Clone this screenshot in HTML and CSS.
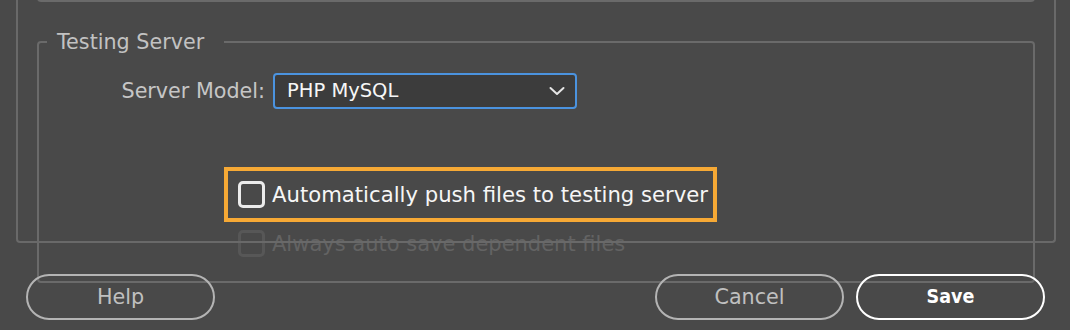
FILE: index.html
```html
<!DOCTYPE html>
<html lang="en">
<head>
<meta charset="utf-8">
<title>Site Setup - Testing Server</title>
<link rel="stylesheet" href="styles.css">
</head>
<body>
<div class="page">
  <div class="outer-frame"></div>
  <div class="prev-group"></div>
  <fieldset class="group">
    <legend class="group-title">Testing Server</legend>
    <div class="field-row">
      <label class="field-label">Server Model:</label>
      <div class="select">
        <span class="select-value">PHP MySQL</span>
        <svg class="chevron" width="16" height="10" viewBox="0 0 16 10"><path d="M1.5 2 L8 8 L14.5 2" fill="none" stroke="#e6e6e6" stroke-width="2" stroke-linecap="round" stroke-linejoin="round"/></svg>
      </div>
    </div>
    <div class="check-focus">
      <span class="checkbox"></span>
      <span class="check-label">Automatically push files to testing server</span>
    </div>
    <div class="check-row disabled">
      <span class="checkbox"></span>
      <span class="check-label">Always auto save dependent files</span>
    </div>
  </fieldset>
  <div class="buttons">
    <button class="btn">Help</button>
    <div class="spacer"></div>
    <button class="btn">Cancel</button>
    <button class="btn primary">Save</button>
  </div>
</div>
</body>
</html>
```

FILE: styles.css
```css
html, body {
  margin: 0;
  padding: 0;
  background: #494949;
  width: 1070px;
  height: 330px;
  overflow: hidden;
}

.page {
  position: relative;
  width: 1070px;
  height: 330px;
  font-family: "DejaVu Sans", "Noto Sans", sans-serif;
}

.outer-frame {
  position: absolute;
  left: 16px;
  top: -10px;
  width: 1040px;
  height: 257px;
  box-sizing: border-box;
  border: 2px solid #696969;
  border-top: none;
  border-radius: 0 0 4px 4px;
  pointer-events: none;
}

.prev-group {
  margin: -4px 35px 0 37px;
  height: 4px;
  border: 2px solid #6a6a6a;
  border-top: none;
  border-radius: 0 0 4px 4px;
}

.group {
  margin: 29px 35px 0 37px;
  padding: 0 0 24px 0;
  border: 2px solid #6a6a6a;
  border-radius: 4px;
  min-width: 0;
}

.group-title {
  margin-left: 8px;
  padding: 0 20px 0 10px;
  font-size: 20.7px;
  line-height: 22px;
  color: #c2c2c2;
}

.field-row {
  display: flex;
  align-items: center;
  margin-top: 20px;
  gap: 8px;
}

.field-label {
  width: 226px;
  text-align: right;
  font-size: 20.7px;
  line-height: 24px;
  color: #c6c6c6;
  white-space: nowrap;
}

.select {
  box-sizing: border-box;
  width: 304px;
  height: 36px;
  border: 2px solid #4b93df;
  border-radius: 4px;
  background: #3c3c3c;
  display: flex;
  align-items: center;
  padding: 0 10px 0 12px;
}

.select-value {
  flex: 1;
  font-size: 19.5px;
  line-height: 24px;
  color: #f6f6f6;
}

.chevron {
  display: block;
}

.check-focus {
  box-sizing: border-box;
  display: flex;
  align-items: center;
  width: 493px;
  height: 55px;
  margin: 58px 0 0 185px;
  border: 4px solid #f6a935;
  padding: 0 5px 0 10px;
  gap: 7px;
}

.check-row {
  display: flex;
  align-items: center;
  gap: 7px;
  margin: 8px 0 0 199px;
  height: 27px;
}

.checkbox {
  box-sizing: border-box;
  width: 27px;
  height: 27px;
  border: 3px solid #ebebeb;
  border-radius: 5px;
  flex: none;
}

.check-label {
  font-size: 21.2px;
  line-height: 26px;
  color: #f6f6f6;
  white-space: nowrap;
}

.disabled .checkbox {
  border-color: #575757;
}

.disabled .check-label {
  font-size: 21px;
  color: #636363;
}

.buttons {
  display: flex;
  align-items: center;
  gap: 12px;
  margin-top: -9px;
  padding: 0 25px 0 26px;
}

.spacer {
  flex: 1;
}

.btn {
  box-sizing: border-box;
  width: 189px;
  height: 46px;
  border: 2px solid #b4b4b4;
  border-radius: 23px;
  background: transparent;
  color: #c0c0c0;
  font-family: "DejaVu Sans", "Noto Sans", sans-serif;
  font-size: 20.7px;
  line-height: 24px;
  padding: 0;
}

.btn.primary {
  border-color: #ffffff;
  color: #ffffff;
  font-family: "DejaVu Sans Condensed", "DejaVu Sans", sans-serif;
  font-weight: bold;
  font-size: 19.5px;
}
```
